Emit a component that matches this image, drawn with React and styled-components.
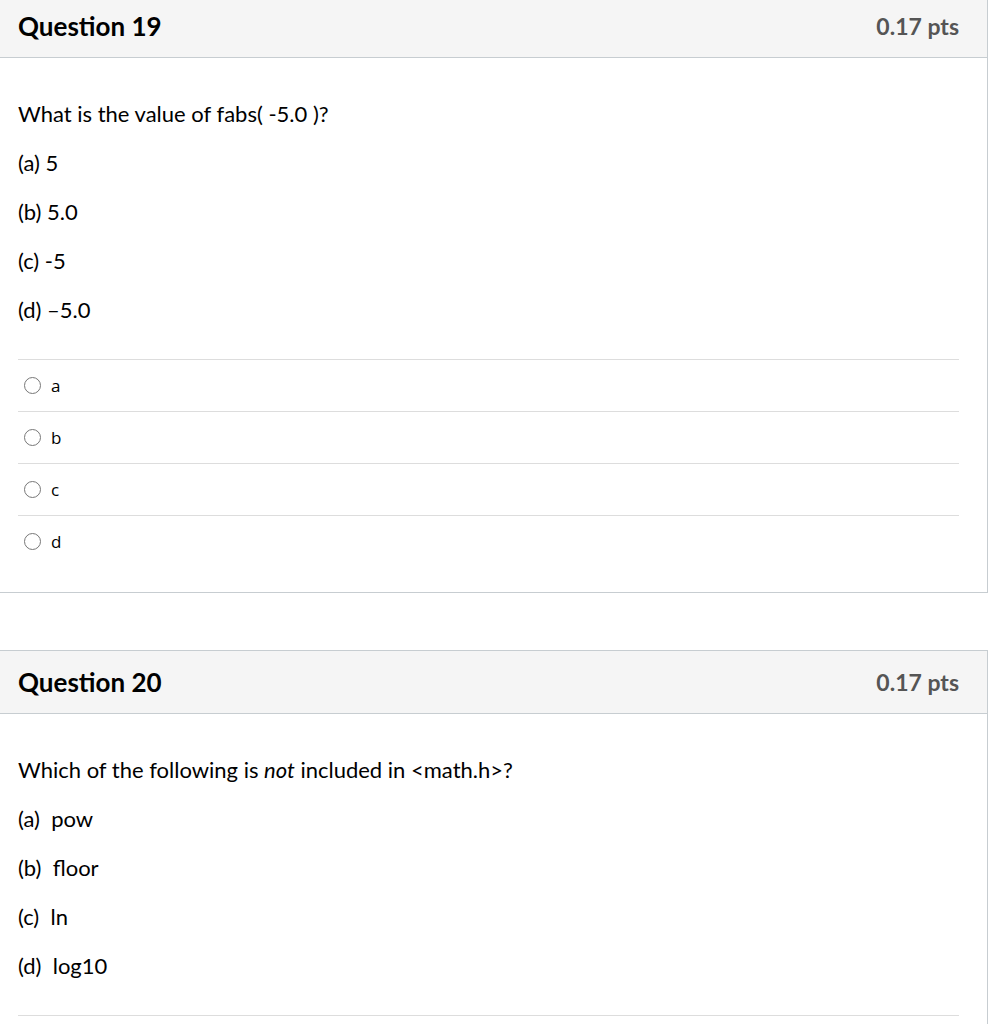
import styled, { createGlobalStyle } from "styled-components";

const GlobalStyle = createGlobalStyle`
  body {
    margin: 0;
    background: #fff;
    font-family: Lato, "Liberation Sans", sans-serif;
    color: #2d3b45;
  }
`;

const Page = styled.div`
  margin-top: -6px;
  width: 988px;
  display: flex;
  flex-direction: column;
  gap: 57px;
`;

const Card = styled.div`
  border: 1px solid #c7cdd1;
  border-left: none;
  background: #fff;
`;

const Header = styled.div`
  height: 62px;
  background: #f5f5f5;
  border-bottom: 1px solid #c7cdd1;
  display: flex;
  align-items: center;
  justify-content: space-between;
  padding: 0 28px 0 18px;
`;

const Title = styled.h2`
  margin: 0;
  font-size: 26px;
  font-weight: 700;
  color: #000;
`;

const Points = styled.span`
  font-size: 23px;
  font-weight: 700;
  color: #555;
`;

const Body = styled.div`
  padding: 41px 28px 25px 18px;
  color: #000;
`;

const Para = styled.p`
  margin: 0 0 19px;
  font-size: 22px;
  line-height: 30px;
`;

const Answers = styled.div`
  padding-top: 15px;
`;

const Row = styled.label`
  display: flex;
  align-items: center;
  gap: 10px;
  height: 51px;
  border-top: 1px solid #ddd;
  padding-left: 6px;
  font-family: "Open Sans", "Liberation Sans", sans-serif;
  font-size: 17px;
  color: #000;
`;

const Radio = styled.span`
  width: 17px;
  height: 17px;
  box-sizing: border-box;
  border-radius: 50%;
  border: 1px solid #777;
  background: #fff;
`;

function Question({ number, points, prompt, options, answers }) {
  return (
    <Card>
      <Header>
        <Title>Question {number}</Title>
        <Points>{points} pts</Points>
      </Header>
      <Body>
        <Para>{prompt}</Para>
        {options.map((o) => (
          <Para key={o}>{o}</Para>
        ))}
        <Answers>
          {answers.map((a) => (
            <Row key={a}>
              <Radio />
              {a}
            </Row>
          ))}
        </Answers>
      </Body>
    </Card>
  );
}

export default function App() {
  return (
    <>
      <GlobalStyle />
      <Page>
        <Question
          number={19}
          points="0.17"
          prompt="What is the value of fabs( -5.0 )?"
          options={["(a) 5", "(b) 5.0", "(c) -5", "(d) \u20135.0"]}
          answers={["a", "b", "c", "d"]}
        />
        <Question
          number={20}
          points="0.17"
          prompt={
            <>
              Which of the following is <em>not</em> included in &lt;math.h&gt;?
            </>
          }
          options={["(a)\u00a0 pow", "(b)\u00a0 floor", "(c)\u00a0 ln", "(d)\u00a0 log10"]}
          answers={["a", "b", "c", "d"]}
        />
      </Page>
    </>
  );
}
